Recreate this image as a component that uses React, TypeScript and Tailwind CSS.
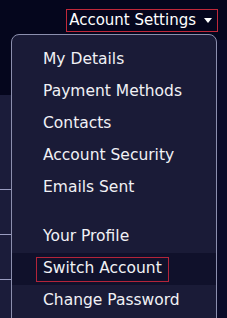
const items = ["My Details", "Payment Methods", "Contacts", "Account Security", "Emails Sent"];
const items2 = ["Your Profile", "Switch Account", "Change Password"];

function MenuItem({ label, active }: { label: string; active?: boolean }) {
  if (active) {
    return (
      <div className="flex h-[32px] items-center bg-[#10112b] pl-[24px]">
        <span className="flex h-[25px] items-center border border-[#b3243a] px-[6px]">{label}</span>
      </div>
    );
  }
  return <div className="flex h-[32px] items-center pl-[31px]">{label}</div>;
}

export default function App() {
  return (
    <div
      className="relative flex h-[318px] w-[227px] overflow-hidden bg-[#05061d] text-white"
      style={{ fontFamily: "'DejaVu Sans', sans-serif" }}
    >
      {/* page behind the menu */}
      <div className="flex w-[12px] flex-col">
        <div className="h-[95px]" />
        <div className="flex flex-1 flex-col gap-[44px] bg-[#1b1c3a] pt-[94px]">
          <div className="h-px bg-[#9a9cc0]" />
          <div className="h-px bg-[#9a9cc0]" />
          <div className="h-px bg-[#9a9cc0]" />
        </div>
      </div>
      <div className="flex-1" />
      <div className="mt-[40px] w-[11px] bg-[#0a0b28]" />

      <div className="absolute right-[9px] top-[9px]">
        <button className="flex h-[23px] items-center gap-[8px] border border-[#c0283a] pl-[2px] pr-[5px] text-[15px] text-white">
          Account Settings
          <svg width="8" height="5" viewBox="0 0 8 5">
            <path d="M0 0h8L4 5z" fill="#fff" />
          </svg>
        </button>
      </div>

      <div className="absolute left-[11px] top-[34px] h-[300px] w-[206px] rounded-[8px] border border-[#8c8fae] bg-[#1a1b37] pt-[9px] text-[15.5px] text-[#f1f1f5]">
        {items.map((t) => (
          <MenuItem key={t} label={t} />
        ))}
        <div className="h-[17px]" />
        {items2.map((t) => (
          <MenuItem key={t} label={t} active={t === "Switch Account"} />
        ))}
      </div>
    </div>
  );
}
